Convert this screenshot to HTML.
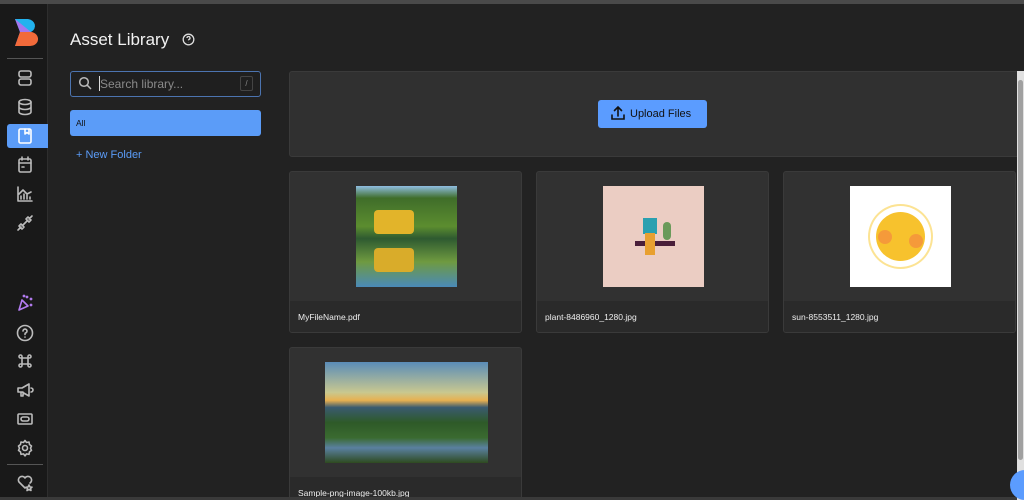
<!DOCTYPE html>
<html style="overflow:hidden;height:500px"><head><meta charset="utf-8"><style>
*{margin:0;padding:0;box-sizing:border-box}
body{width:1024px;height:500px;overflow:hidden;background:#222;font-family:"Liberation Sans",sans-serif;position:relative;color:#eee}
.abs{position:absolute}
.topbar{left:0;top:0;width:1024px;height:4px;background:#4a4a4a}
.side{left:0;top:4px;width:48px;height:496px;background:#191919;border-right:1px solid #2e2e2e}
.ic{position:absolute;left:15px;width:20px;height:20px}
.ic svg{width:20px;height:20px;fill:none;stroke:#bbb;stroke-width:1.6;stroke-linecap:round;stroke-linejoin:round}
.card{position:absolute;width:233px;height:162px;border:1px solid #3a3a3a;border-radius:3px;background:#313131;overflow:hidden}
.card .ft{position:absolute;left:0;right:0;top:129px;height:32px;background:#2a2a2a;font-size:8.5px;color:#eee;padding:11px 0 0 8px}
.card .img{position:absolute}
</style></head><body>
<div class="abs topbar"></div>
<div class="abs side">
 <svg class="abs" style="left:14px;top:15px" width="24" height="28" viewBox="0 0 24 28">
  <path d="M1 0h13a8 7 0 0 1 3 13H6z" fill="#22b2ee"/>
  <path d="M1 0l5 13-5 14 q11-3 16-14z" fill="#a476ee"/>
  <path d="M6 13h11a8 7 0 0 1-2 14H1z" fill="#f26a3a"/>
 </svg>
 <div class="abs" style="left:7px;top:54px;width:36px;height:1px;background:#555"></div>
 <div class="abs" style="left:7px;top:120px;width:41px;height:24px;background:#5b9cf8;border-radius:3px 0 0 3px"></div>
 <div class="ic" style="top:64px"><svg viewBox="0 0 20 20"><rect x="4" y="3" width="12" height="6" rx="2"/><rect x="4" y="11" width="12" height="6" rx="2"/></svg></div>
 <div class="ic" style="top:93px"><svg viewBox="0 0 20 20"><ellipse cx="10" cy="5" rx="6" ry="2.5"/><path d="M4 5v10c0 1.4 2.7 2.5 6 2.5s6-1.1 6-2.5V5M4 10c0 1.4 2.7 2.5 6 2.5s6-1.1 6-2.5"/></svg></div>
 <div class="ic" style="top:122px"><svg viewBox="0 0 20 20" style="stroke:#fff"><rect x="4" y="3" width="12" height="14" rx="1.5"/><path d="M10 3v5l2-1.5 2 1.5V3"/></svg></div>
 <div class="ic" style="top:151px"><svg viewBox="0 0 20 20"><rect x="4" y="4" width="12" height="13" rx="1.5"/><path d="M4 8h12M7 2v3M13 2v3M7 12h2"/></svg></div>
 <div class="ic" style="top:180px"><svg viewBox="0 0 20 20"><path d="M3 3v14h14M6 15v-3M9 15v-5M12 15v-4M15 15v-2M4 10l4-4 4 4 4-2"/></svg></div>
 <div class="ic" style="top:209px"><svg viewBox="0 0 20 20"><path d="M3 17l3-3M17 3l-3 3M6 11l3 3-2 2-3-3zM11 6l3 3 2-2-3-3zM8 12l4-4"/></svg></div>
 <div class="ic" style="top:289px"><svg viewBox="0 0 20 20" style="stroke:#b47cf2"><path d="M4 17l3-10 6 6z"/><circle cx="12" cy="4" r=".6"/><circle cx="16" cy="6" r=".6"/><circle cx="16" cy="12" r=".6"/><circle cx="9" cy="3" r=".6"/></svg></div>
 <div class="ic" style="top:319px"><svg viewBox="0 0 20 20"><circle cx="10" cy="10" r="7.5"/><path d="M8 8a2 2 0 1 1 2.5 2c-.5.2-.5.7-.5 1.5M10 14v.1"/></svg></div>
 <div class="ic" style="top:347px"><svg viewBox="0 0 20 20"><path d="M7 7h6v6H7zM7 7V5.5A1.5 1.5 0 1 0 5.5 7zM13 7V5.5A1.5 1.5 0 1 1 14.5 7zM7 13v1.5A1.5 1.5 0 1 1 5.5 13zM13 13v1.5A1.5 1.5 0 1 0 14.5 13z"/></svg></div>
 <div class="ic" style="top:376px"><svg viewBox="0 0 20 20"><path d="M3 8h4l7-4v12l-7-4H3zM6 12v4h2v-4M16 8a2 2 0 0 1 0 4"/></svg></div>
 <div class="ic" style="top:405px"><svg viewBox="0 0 20 20"><rect x="3" y="5" width="14" height="10" rx="1"/><rect x="6" y="8" width="8" height="4" rx="2"/></svg></div>
 <div class="ic" style="top:434px"><svg viewBox="0 0 20 20"><circle cx="10" cy="10" r="2.5"/><path d="M10 2.5l1.5 2 2.5-.5.5 2.5 2 1.5-1 2.2 1 2.2-2 1.5-.5 2.5-2.5-.5-1.5 2-1.5-2-2.5.5-.5-2.5-2-1.5 1-2.2-1-2.2 2-1.5.5-2.5 2.5.5z"/></svg></div>
 <div class="abs" style="left:7px;top:460px;width:36px;height:1px;background:#555"></div>
 <div class="ic" style="top:468px"><svg viewBox="0 0 20 20"><path d="M10 16L4 10a3.5 3.5 0 0 1 6-4 3.5 3.5 0 0 1 6 4l-1 1M14 13l1 2 2 .2-1.5 1.3.5 2-2-1-2 1 .5-2L11 15.2l2-.2z"/></svg></div>
</div>
<div class="abs" style="left:70px;top:30px;font-size:17px;color:#f2f2f2">Asset Library</div>
<svg class="abs" style="left:182px;top:33px" width="13" height="13" viewBox="0 0 13 13" fill="none" stroke="#ddd" stroke-width="1.3"><circle cx="6.5" cy="6.5" r="5.3"/><path d="M5 5a1.5 1.5 0 1 1 2 1.4c-.4.2-.5.5-.5 1M6.5 9.3v.1"/></svg>
<div class="abs" style="left:70px;top:71px;width:191px;height:26px;border:1px solid #4c74b0;border-radius:3px;background:#1f1f1f"></div>
<svg class="abs" style="left:78px;top:76px" width="14" height="14" viewBox="0 0 14 14" fill="none" stroke="#bbb" stroke-width="1.5"><circle cx="6" cy="6" r="4.3"/><path d="M9.2 9.2L13 13"/></svg>
<div class="abs" style="left:99px;top:76px;width:1px;height:15px;background:#ddd"></div>
<div class="abs" style="left:100px;top:77px;font-size:12px;color:#8a8a8a">Search library...</div>
<div class="abs" style="left:240px;top:76px;width:13px;height:15px;border:1px solid #444;border-radius:2px;font-size:8px;color:#888;text-align:center;line-height:13px">/</div>
<div class="abs" style="left:70px;top:110px;width:191px;height:26px;background:#5b9cf8;border-radius:3px;font-size:8.5px;color:#111;padding:8px 0 0 6px">All</div>
<div class="abs" style="left:76px;top:149px;font-size:11px;color:#5b9cf8">+ New Folder</div>
<div class="abs" style="left:289px;top:71px;width:740px;height:86px;background:#303030;border:1px solid #3a3a3a;border-radius:3px"></div>
<div class="abs" style="left:598px;top:100px;width:109px;height:28px;background:#5b9cff;border-radius:3px;font-size:11px;color:#111;padding:8px 0 0 32px">Upload Files</div>
<svg class="abs" style="left:609px;top:104px" width="18" height="18" viewBox="0 0 18 18" fill="none" stroke="#111" stroke-width="1.6" stroke-linecap="round"><path d="M9 12V3M5.5 6.5L9 3l3.5 3.5M3 11v4h12v-4"/></svg>
<div class="card" style="left:289px;top:171px"><div class="img" style="left:66px;top:14px;width:101px;height:101px;background:linear-gradient(#8fbde0 0,#3f6d2a 12%,#5c8d2f 40%,#2e5a30 52%,#6f9a40 75%,#4a8ab8 100%)"><div style="position:absolute;left:18px;top:24px;width:40px;height:24px;background:#e2b42a;border-radius:4px"></div><div style="position:absolute;left:18px;top:62px;width:40px;height:24px;background:#d9ac2a;border-radius:4px"></div></div><div class="ft">MyFileName.pdf</div></div>
<div class="card" style="left:536px;top:171px"><div class="img" style="left:66px;top:14px;width:101px;height:101px;background:#ebcdc3"><div style="position:absolute;left:32px;top:55px;width:40px;height:5px;background:#4a1f3a"></div><div style="position:absolute;left:40px;top:32px;width:14px;height:16px;background:#2aa0b0"></div><div style="position:absolute;left:42px;top:47px;width:10px;height:22px;background:#e8a030"></div><div style="position:absolute;left:60px;top:36px;width:8px;height:18px;background:#6a9a5a;border-radius:4px"></div></div><div class="ft">plant-8486960_1280.jpg</div></div>
<div class="card" style="left:783px;top:171px"><div class="img" style="left:66px;top:14px;width:101px;height:101px;background:#fff"><div style="position:absolute;left:26px;top:26px;width:49px;height:49px;border-radius:50%;background:#f7c22d;box-shadow:0 0 0 6px #fff,0 0 0 8px rgba(250,200,40,.5)"></div><div style="position:absolute;left:28px;top:44px;width:14px;height:14px;border-radius:50%;background:#f59a3a"></div><div style="position:absolute;left:59px;top:48px;width:14px;height:14px;border-radius:50%;background:#f59a3a"></div></div><div class="ft">sun-8553511_1280.jpg</div></div>
<div class="card" style="left:289px;top:347px;height:153px;border-bottom:none;border-radius:3px 3px 0 0"><div class="img" style="left:35px;top:14px;width:163px;height:101px;background:linear-gradient(#5a8cb8 0,#c8c890 30%,#e8b050 38%,#3a5a70 45%,#2e5a28 60%,#3a6a30 75%,#5a80a0 85%,#2e4a20 100%)"></div><div class="ft">Sample-png-image-100kb.jpg</div></div>
<div class="abs" style="left:0;top:497px;width:1024px;height:3px;background:#3a3a3a"></div>
<div class="abs" style="left:1017px;top:71px;width:7px;height:429px;background:#e0e0e0"></div>
<div class="abs" style="left:1018px;top:80px;width:5px;height:380px;background:#a0a0a0;border-radius:3px"></div>
<div class="abs" style="left:1010px;top:470px;width:30px;height:30px;border-radius:50%;background:#5b9cff"></div>
</body></html>
